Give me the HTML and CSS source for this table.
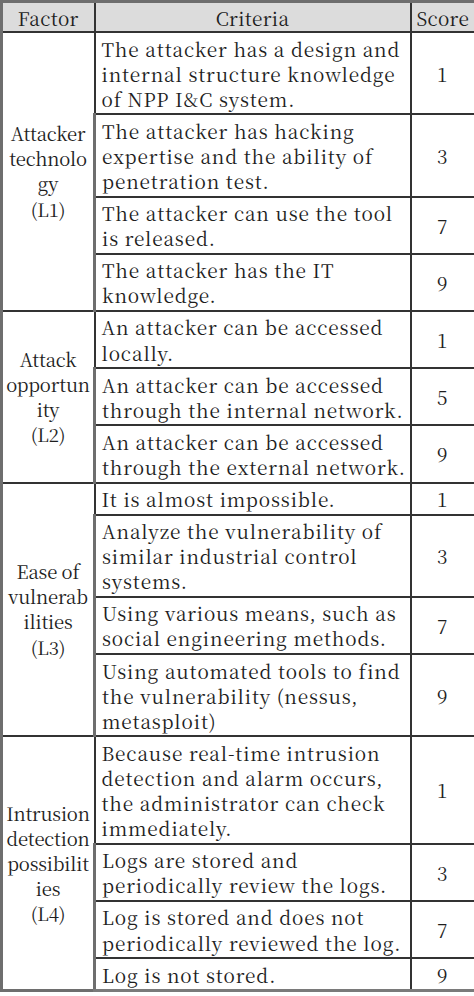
FILE: index.html
```html
<!DOCTYPE html>
<html>
<head>
<meta charset="utf-8">
<link rel="stylesheet" href="styles.css">
</head>
<body>
<table class="grid">
<colgroup><col class="c-factor"><col class="c-crit"><col class="c-score"></colgroup>
<thead>
<tr><th>Factor</th><th>Criteria</th><th>Score</th></tr>
</thead>
<tbody>
<tr><td class="factor" rowspan="4">Attacker<br>technolo<br>gy<br>(L1)</td><td class="crit">The attacker has a design and<br>internal structure knowledge<br>of NPP I&amp;C system.</td><td class="score">1</td></tr>
<tr><td class="crit">The attacker has hacking<br>expertise and the ability of<br>penetration test.</td><td class="score">3</td></tr>
<tr><td class="crit">The attacker can use the tool<br>is released.</td><td class="score">7</td></tr>
<tr><td class="crit">The attacker has the IT<br>knowledge.</td><td class="score">9</td></tr>

<tr><td class="factor" rowspan="3">Attack<br>opportun<br>ity<br>(L2)</td><td class="crit">An attacker can be accessed<br>locally.</td><td class="score">1</td></tr>
<tr><td class="crit">An attacker can be accessed<br>through the internal network.</td><td class="score">5</td></tr>
<tr><td class="crit">An attacker can be accessed<br>through the external network.</td><td class="score">9</td></tr>

<tr><td class="factor" rowspan="4">Ease of<br>vulnerab<br>ilities<br>(L3)</td><td class="crit">It is almost impossible.</td><td class="score">1</td></tr>
<tr><td class="crit">Analyze the vulnerability of<br>similar industrial control<br>systems.</td><td class="score">3</td></tr>
<tr><td class="crit">Using various means, such as<br>social engineering methods.</td><td class="score">7</td></tr>
<tr><td class="crit">Using automated tools to find<br>the vulnerability (nessus,<br>metasploit)</td><td class="score">9</td></tr>

<tr><td class="factor" rowspan="4">Intrusion<br>detection<br>possibilit<br>ies<br>(L4)</td><td class="crit">Because real-time intrusion<br>detection and alarm occurs,<br>the administrator can check<br>immediately.</td><td class="score">1</td></tr>
<tr><td class="crit">Logs are stored and<br>periodically review the logs.</td><td class="score">3</td></tr>
<tr><td class="crit">Log is stored and does not<br>periodically reviewed the log.</td><td class="score">7</td></tr>
<tr><td class="crit">Log is not stored.</td><td class="score">9</td></tr>
</tbody>
</table>
</body>
</html>
```
FILE: styles.css
```css
html, body {
  margin: 0;
  padding: 0;
  background: #ffffff;
}
.grid {
  width: 474px;
  table-layout: fixed;
  border-collapse: collapse;
  border: 3px solid #6e6e6e;
  color: #1e1e1e;
}
.grid th,
.grid td {
  font-family: "Noto Serif CJK KR", "Liberation Serif", serif;
  font-size: 19px;
  letter-spacing: 0.85px;
}
.c-factor { width: 93px; }
.c-crit { width: 316px; }
.c-score { width: 65px; }
.grid th {
  background: #dcdcdc;
  font-weight: normal;
  height: 28px;
  padding: 0 2px;
  line-height: 25px;
  border: 2px solid #333333;
  border-top: 3px solid #6e6e6e;
  text-align: center;
  letter-spacing: 0.3px;
}
.grid td {
  border: 2px solid #333333;
  padding: 2.5px 6px;
  line-height: 25.1px;
  white-space: nowrap;
  vertical-align: middle;
}
.grid td.factor {
  text-align: center;
  padding: 2px 0;
  font-size: 18.5px;
  letter-spacing: -0.2px;
}
.grid td.score {
  text-align: center;
  padding: 2px 0;
}
.grid tr > :first-child { border-left: 3px solid #6e6e6e; }
.grid tr > :last-child { border-right: 3px solid #6e6e6e; }
.grid tbody tr:last-child td { border-bottom: 3px solid #7a7a7a; }
.grid td.factor { border-bottom: 2px solid #333333; }
```
